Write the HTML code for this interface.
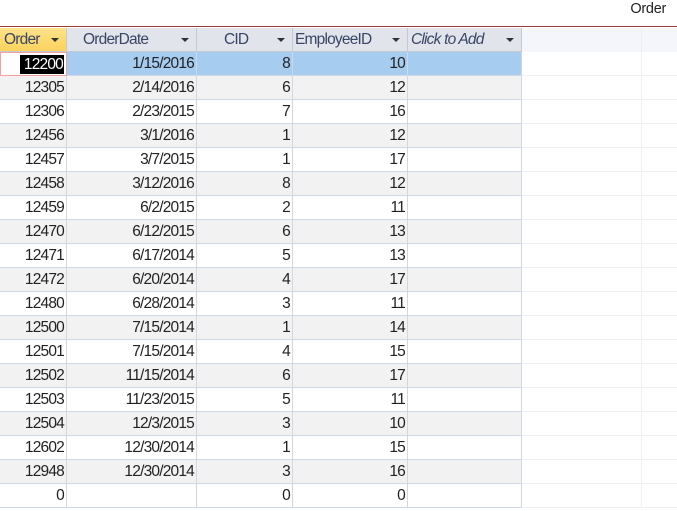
<!DOCTYPE html>
<html><head><meta charset="utf-8"><style>
*{margin:0;padding:0;box-sizing:border-box}
body{width:677px;height:511px;background:#fff;position:relative;overflow:hidden;font-family:"Liberation Sans",sans-serif;font-size:15.5px;letter-spacing:-0.8px;color:#222}
.top{position:absolute;left:0;top:0;width:677px;height:27px;border-bottom:1px solid #a33a3a}
.top span{position:absolute;right:11px;top:1px;font-size:14.5px;letter-spacing:-0.3px;color:#222}
.row{position:absolute;left:0;height:24px;width:677px}
.c{position:absolute;top:0;height:24px;border-right:1px solid #d0d7e5;border-bottom:1px solid #d0d7e5;text-align:right;padding-right:2px;line-height:23px;white-space:nowrap}
.c1{left:0;width:67px}.c2{left:67px;width:130px}.c3{left:197px;width:96px}.c4{left:293px;width:115px}.c5{left:408px;width:114px}
.x1{left:522px;width:120px;border-color:#eef0f4}.x2{left:642px;width:40px;border-color:#eef0f4}
.g .c1,.g .c2,.g .c3,.g .c4,.g .c5{background:#f2f2f2}
.h .c{background:#e1e4ea;color:#3a4666;text-align:left;padding-left:6px;border-right-color:#c4c9d2;border-bottom-color:#c4c9d2}
.h .x1,.h .x2{background:#f5f6fc;border-right-color:#eceef6;border-bottom:none}
.h .c1{background:linear-gradient(#fde38a,#fbd25c);padding-left:4px}
.arr{position:absolute;right:7px;top:10px;width:0;height:0;border-left:4px solid transparent;border-right:4px solid transparent;border-top:4px solid #333}
.s .c1,.s .c2,.s .c3,.s .c4,.s .c5{background:#a6cdf0}
.s .c1{background:#fff;border:1px solid #f2a0a0}
.hl{background:#000;color:#fff;padding:1px 1px 1px 4px}
</style></head><body>
<div class="top"><span>Order</span></div>
<div class="row h" style="top:28px"><div class="c c1">Order<i class="arr"></i></div><div class="c c2" style="padding-left:16px">OrderDate<i class="arr"></i></div><div class="c c3" style="padding-left:27px">CID<i class="arr"></i></div><div class="c c4" style="padding-left:2px">EmployeeID<i class="arr"></i></div><div class="c c5" style="padding-left:3px;font-style:italic">Click to Add<i class="arr"></i></div><div class="c x1"></div><div class="c x2"></div></div>
<div class="row s" style="top:52px"><div class="c c1"><span class="hl">12200</span></div><div class="c c2">1/15/2016</div><div class="c c3">8</div><div class="c c4">10</div><div class="c c5"></div><div class="c x1"></div><div class="c x2"></div></div>
<div class="row g" style="top:76px"><div class="c c1">12305</div><div class="c c2">2/14/2016</div><div class="c c3">6</div><div class="c c4">12</div><div class="c c5"></div><div class="c x1"></div><div class="c x2"></div></div>
<div class="row" style="top:100px"><div class="c c1">12306</div><div class="c c2">2/23/2015</div><div class="c c3">7</div><div class="c c4">16</div><div class="c c5"></div><div class="c x1"></div><div class="c x2"></div></div>
<div class="row g" style="top:124px"><div class="c c1">12456</div><div class="c c2">3/1/2016</div><div class="c c3">1</div><div class="c c4">12</div><div class="c c5"></div><div class="c x1"></div><div class="c x2"></div></div>
<div class="row" style="top:148px"><div class="c c1">12457</div><div class="c c2">3/7/2015</div><div class="c c3">1</div><div class="c c4">17</div><div class="c c5"></div><div class="c x1"></div><div class="c x2"></div></div>
<div class="row g" style="top:172px"><div class="c c1">12458</div><div class="c c2">3/12/2016</div><div class="c c3">8</div><div class="c c4">12</div><div class="c c5"></div><div class="c x1"></div><div class="c x2"></div></div>
<div class="row" style="top:196px"><div class="c c1">12459</div><div class="c c2">6/2/2015</div><div class="c c3">2</div><div class="c c4">11</div><div class="c c5"></div><div class="c x1"></div><div class="c x2"></div></div>
<div class="row g" style="top:220px"><div class="c c1">12470</div><div class="c c2">6/12/2015</div><div class="c c3">6</div><div class="c c4">13</div><div class="c c5"></div><div class="c x1"></div><div class="c x2"></div></div>
<div class="row" style="top:244px"><div class="c c1">12471</div><div class="c c2">6/17/2014</div><div class="c c3">5</div><div class="c c4">13</div><div class="c c5"></div><div class="c x1"></div><div class="c x2"></div></div>
<div class="row g" style="top:268px"><div class="c c1">12472</div><div class="c c2">6/20/2014</div><div class="c c3">4</div><div class="c c4">17</div><div class="c c5"></div><div class="c x1"></div><div class="c x2"></div></div>
<div class="row" style="top:292px"><div class="c c1">12480</div><div class="c c2">6/28/2014</div><div class="c c3">3</div><div class="c c4">11</div><div class="c c5"></div><div class="c x1"></div><div class="c x2"></div></div>
<div class="row g" style="top:316px"><div class="c c1">12500</div><div class="c c2">7/15/2014</div><div class="c c3">1</div><div class="c c4">14</div><div class="c c5"></div><div class="c x1"></div><div class="c x2"></div></div>
<div class="row" style="top:340px"><div class="c c1">12501</div><div class="c c2">7/15/2014</div><div class="c c3">4</div><div class="c c4">15</div><div class="c c5"></div><div class="c x1"></div><div class="c x2"></div></div>
<div class="row g" style="top:364px"><div class="c c1">12502</div><div class="c c2">11/15/2014</div><div class="c c3">6</div><div class="c c4">17</div><div class="c c5"></div><div class="c x1"></div><div class="c x2"></div></div>
<div class="row" style="top:388px"><div class="c c1">12503</div><div class="c c2">11/23/2015</div><div class="c c3">5</div><div class="c c4">11</div><div class="c c5"></div><div class="c x1"></div><div class="c x2"></div></div>
<div class="row g" style="top:412px"><div class="c c1">12504</div><div class="c c2">12/3/2015</div><div class="c c3">3</div><div class="c c4">10</div><div class="c c5"></div><div class="c x1"></div><div class="c x2"></div></div>
<div class="row" style="top:436px"><div class="c c1">12602</div><div class="c c2">12/30/2014</div><div class="c c3">1</div><div class="c c4">15</div><div class="c c5"></div><div class="c x1"></div><div class="c x2"></div></div>
<div class="row g" style="top:460px"><div class="c c1">12948</div><div class="c c2">12/30/2014</div><div class="c c3">3</div><div class="c c4">16</div><div class="c c5"></div><div class="c x1"></div><div class="c x2"></div></div>
<div class="row" style="top:484px"><div class="c c1">0</div><div class="c c2"></div><div class="c c3">0</div><div class="c c4">0</div><div class="c c5"></div><div class="c x1"></div><div class="c x2"></div></div>
</body></html>
